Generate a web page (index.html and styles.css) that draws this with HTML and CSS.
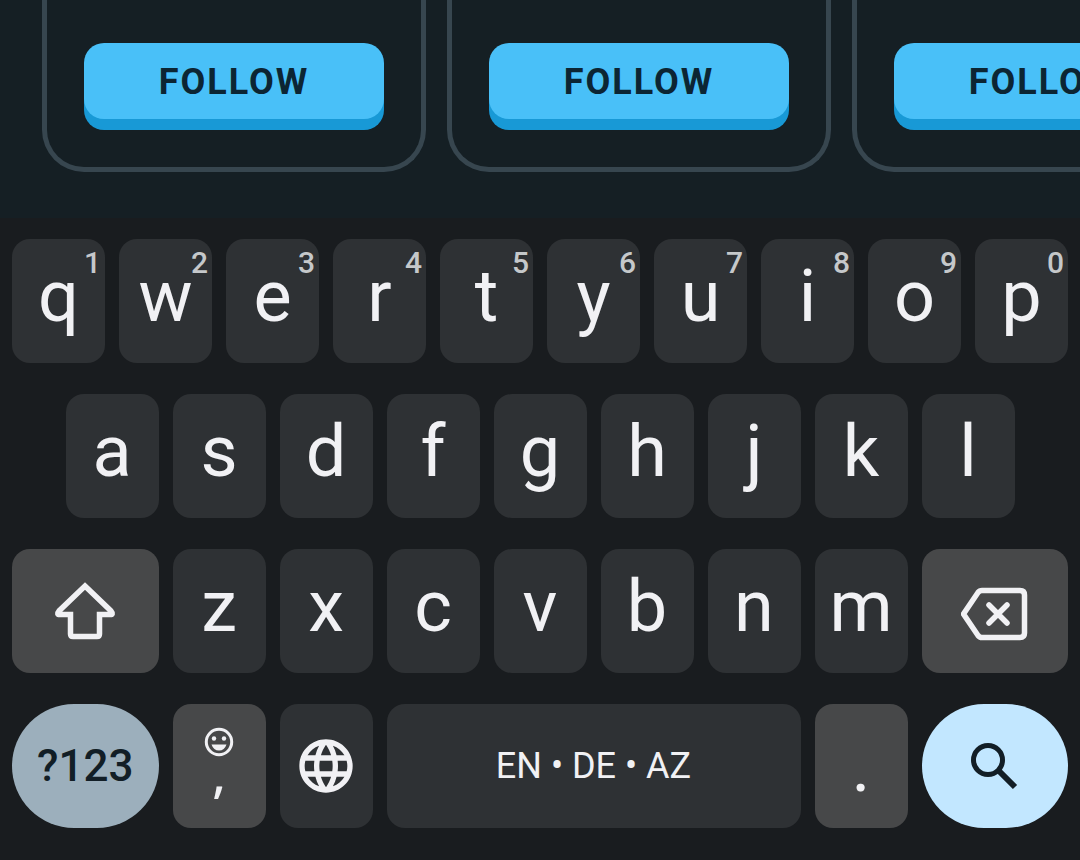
FILE: index.html
```html
<!DOCTYPE html>
<html lang="en">
<head>
  <meta charset="UTF-8">
  <meta name="viewport" content="width=device-width, initial-scale=1.0">
  <title>Follow suggestions</title>
  <link rel="stylesheet" href="styles.css">
</head>
<body>
  <main class="cards">
    <div class="card"><button class="follow">FOLLOW</button></div>
    <div class="card"><button class="follow">FOLLOW</button></div>
    <div class="card"><button class="follow">FOLLOW</button></div>
  </main>

  <div class="keyboard">
    <button class="key">q<span class="hint">1</span></button>
    <button class="key">w<span class="hint">2</span></button>
    <button class="key">e<span class="hint">3</span></button>
    <button class="key">r<span class="hint">4</span></button>
    <button class="key">t<span class="hint">5</span></button>
    <button class="key">y<span class="hint">6</span></button>
    <button class="key">u<span class="hint">7</span></button>
    <button class="key">i<span class="hint">8</span></button>
    <button class="key">o<span class="hint">9</span></button>
    <button class="key">p<span class="hint">0</span></button>

    <button class="key indent">a</button>
    <button class="key">s</button>
    <button class="key">d</button>
    <button class="key">f</button>
    <button class="key">g</button>
    <button class="key">h</button>
    <button class="key">j</button>
    <button class="key">k</button>
    <button class="key">l</button>

    <button class="key wide dim row-start" aria-label="Shift">
      <svg width="62" height="60" viewBox="0 0 62 60" fill="none" stroke="#f1f1f4" stroke-width="5.5">
        <path d="M31 5 57 30Q60 33.500 56 33.500H45.500V53Q45.500 55.500 43 55.500H19Q16.500 55.500 16.500 53V33.500H6Q2 33.500 5 30Z"/>
      </svg>
    </button>
    <button class="key">z</button>
    <button class="key">x</button>
    <button class="key">c</button>
    <button class="key">v</button>
    <button class="key">b</button>
    <button class="key">n</button>
    <button class="key">m</button>
    <button class="key wide dim" aria-label="Backspace">
      <svg width="68" height="60" viewBox="0 -6 68 60" fill="none" stroke="#f1f1f4" stroke-width="5.5">
        <path d="M21 3.500H59Q63.500 3.500 63.500 8V46Q63.500 50.500 59 50.500H21Q18.500 50.500 17 48.500L2.500 27 17 5.500Q18.500 3.500 21 3.500Z"/>
        <path d="M28 18 46 36M46 18 28 36" stroke-linecap="round"/>
      </svg>
    </button>

    <button class="key wide pill symbols row-start">?123</button>
    <button class="key dim comma">
      <svg width="30" height="30" viewBox="0 0 30 30" fill="#f1f1f4">
        <circle cx="15" cy="15" r="12.700" fill="none" stroke="#f1f1f4" stroke-width="3"/>
        <circle cx="10" cy="11.500" r="2.200"/>
        <circle cx="20" cy="11.500" r="2.200"/>
        <path d="M7.500 17.500H22.500Q20.500 23.500 15 23.500T7.500 17.500Z"/>
      </svg>
      <span>,</span>
    </button>
    <button class="key globe" aria-label="Change language">
      <svg width="64" height="64" viewBox="0 0 24 24" fill="#f1f1f4">
        <path d="M11.99 2C6.47 2 2 6.48 2 12s4.470 10 9.990 10C17.520 22 22 17.520 22 12S17.520 2 11.990 2zm6.930 6h-2.950c-.320-1.250-.780-2.450-1.380-3.560 1.840.630 3.370 1.910 4.330 3.560zM12 4.040c.830 1.200 1.480 2.530 1.910 3.960h-3.820c.430-1.430 1.080-2.760 1.910-3.960zM4.260 14C4.100 13.360 4 12.690 4 12s.100-1.360.260-2h3.380c-.080.660-.140 1.320-.140 2s.060 1.340.140 2H4.260zm.820 2h2.950c.320 1.250.780 2.450 1.380 3.560-1.840-.630-3.370-1.900-4.330-3.560zm2.950-8H5.080c.960-1.660 2.490-2.930 4.330-3.560C8.810 5.550 8.350 6.750 8.030 8zM12 19.960c-.830-1.200-1.480-2.530-1.910-3.960h3.820c-.430 1.430-1.080 2.760-1.910 3.960zM14.340 14H9.660c-.090-.660-.160-1.320-.160-2s.070-1.350.160-2h4.680c.090.650.160 1.320.160 2s-.070 1.340-.160 2zm.250 5.560c.600-1.110 1.060-2.310 1.380-3.560h2.950c-.960 1.650-2.490 2.930-4.330 3.560zM16.360 14c.080-.660.140-1.320.140-2s-.060-1.340-.140-2h3.380c.160.640.260 1.310.260 2s-.100 1.360-.260 2h-3.380z"/>
      </svg>
    </button>
    <button class="key space">EN • DE • AZ</button>
    <button class="key dim period">.</button>
    <button class="key wide pill search" aria-label="Search">
      <svg width="48" height="48" viewBox="0 0 48 48" fill="none" stroke="#121e26" stroke-width="5">
        <circle cx="17" cy="18" r="14.500"/>
        <path d="M28.500 29.500 44 45" stroke-width="6"/>
      </svg>
    </button>
  </div>
</body>
</html>
```

FILE: styles.css
```css
* { margin: 0; padding: 0; box-sizing: border-box; }

body {
  display: flex;
  flex-direction: column;
  min-height: 100vh;
  background: #151f24;
  font-family: Roboto, "Liberation Sans", sans-serif;
}

button { border: none; font-family: inherit; cursor: pointer; }

.cards {
  display: flex;
  gap: 21px;
  padding: 0 42px 46px;
  overflow: hidden;
}

.card {
  flex: 0 0 384px;
  padding: 43px 37px 37px;
  border: 5px solid #37464f;
  border-top: none;
  border-radius: 0 0 42px 42px;
}

.follow {
  display: block;
  width: 100%;
  height: 76px;
  margin-bottom: 11px;
  padding-top: 2px;
  border-radius: 20px;
  background: #49c0f8;
  box-shadow: 0 11px #1899d6;
  color: #0c2533;
  font-size: 36px;
  font-weight: 700;
  letter-spacing: 2px;
}

/* 20 columns: a letter takes 2, shift and the pills take 3 */
.keyboard {
  flex: 1;
  display: grid;
  grid-template-columns: repeat(20, 1fr);
  align-content: start;
  row-gap: 31px;
  padding: 21px 5px 31px;
  background: #191c1f;
}

.key {
  position: relative;
  display: flex;
  justify-content: center;
  align-items: center;
  grid-column-end: span 2;
  height: 124px;
  margin: 0 7px;
  padding-bottom: 10px;
  border-radius: 18px;
  background: #2e3134;
  color: #f1f1f4;
  font-size: 72px;
}

.hint {
  position: absolute;
  top: 6px;
  right: 4px;
  color: #c5c8ca;
  font-size: 30px;
  font-weight: 500;
}

.indent { grid-column-start: 2; }
.row-start { grid-column-start: 1; }
.wide { grid-column-end: span 3; padding: 0; }
.dim { background: #474849; }
.pill { border-radius: 64px; }

.symbols {
  background: #9cafbc;
  color: #121e26;
  font-size: 44px;
  font-weight: 500;
}

.comma {
  flex-direction: column;
  justify-content: flex-start;
  padding: 23px 0 0;
  font-family: "Noto Sans", sans-serif;
  font-size: 50px;
  font-weight: 500;
  line-height: 32px;
}

.globe { padding: 0; }

.space {
  grid-column-end: span 8;
  padding: 0;
  font-size: 36px;
}

.period { padding: 0; }

.search { background: #c2e7ff; }
```
